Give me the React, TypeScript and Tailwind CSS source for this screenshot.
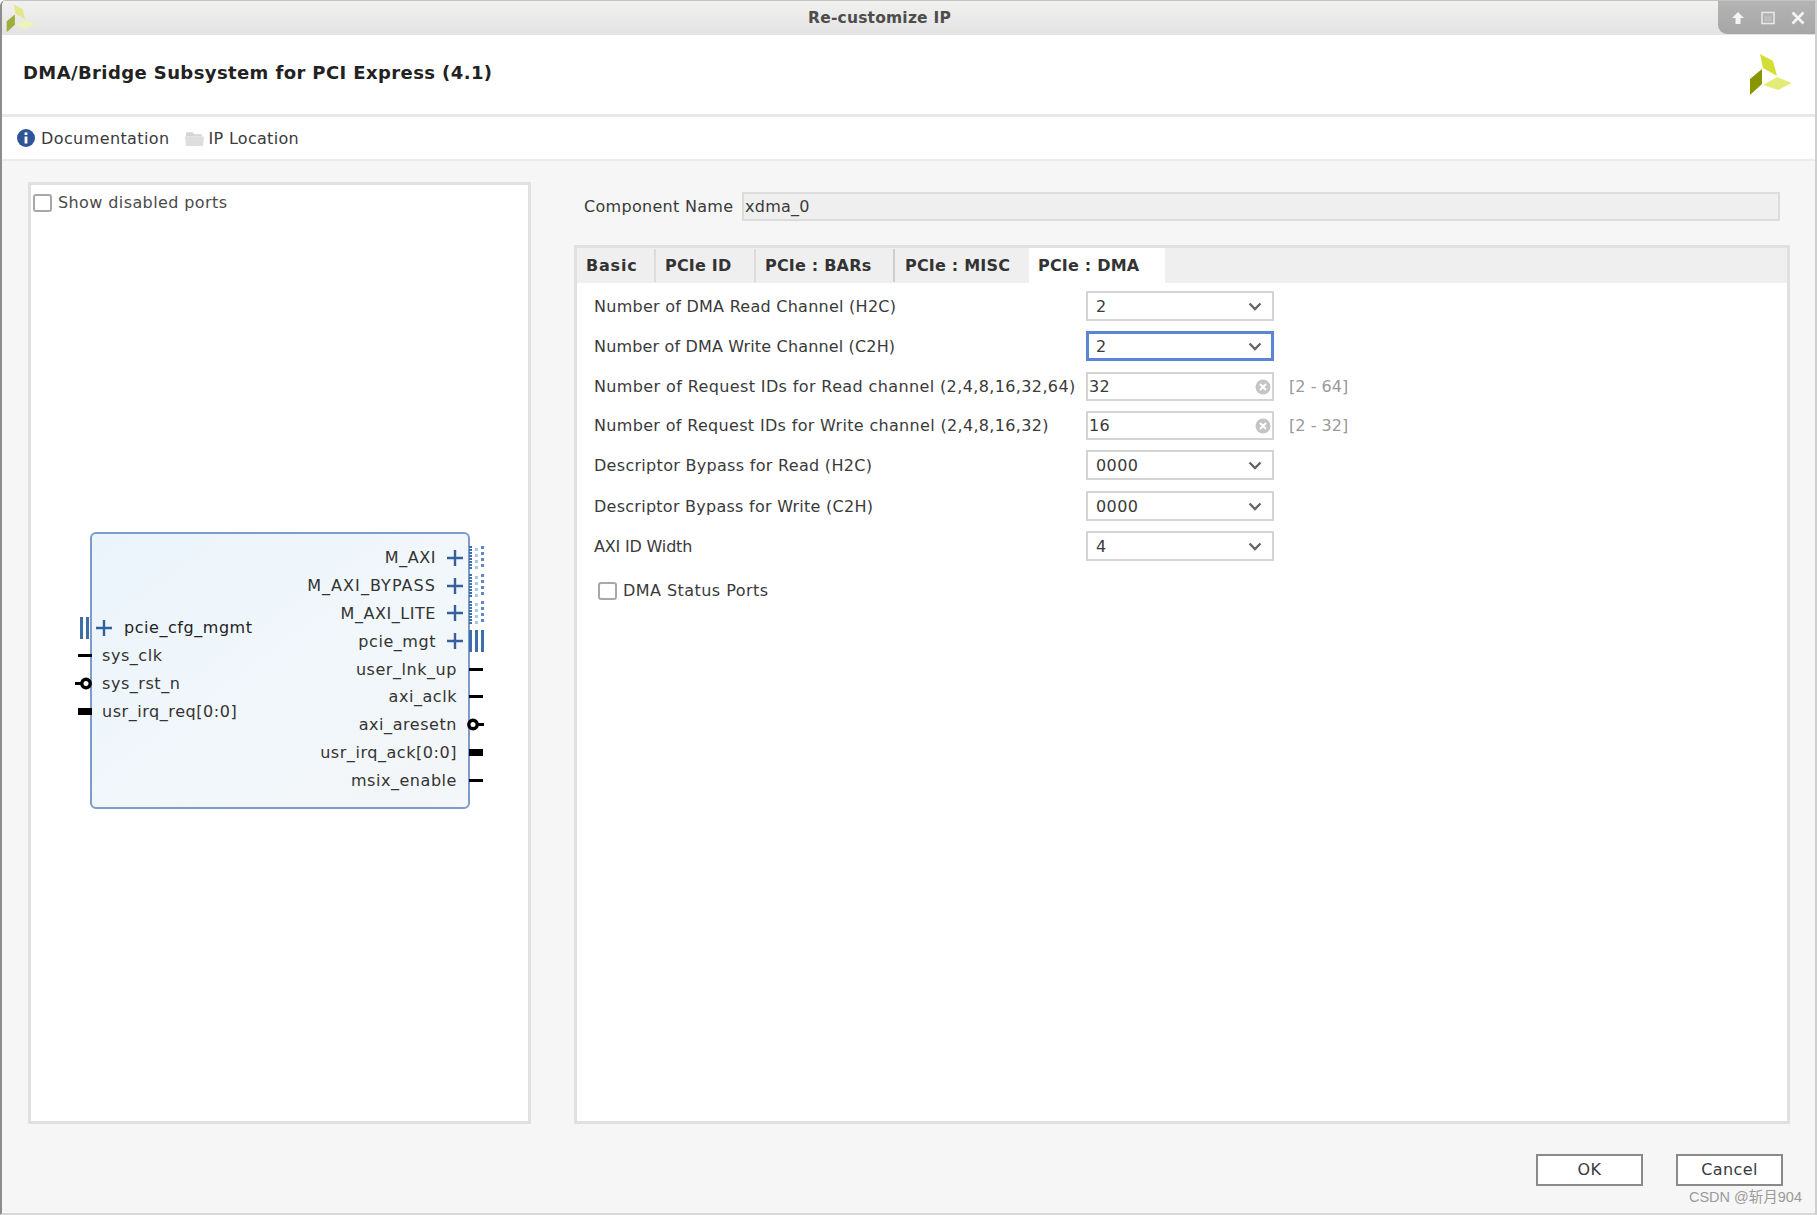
import React from "react";

const font = { fontFamily: '"DejaVu Sans", "Noto Sans CJK SC", sans-serif' };

function Logo({ className, pale }: { className: string; pale?: boolean }) {
  return (
    <svg viewBox="0 0 44 42" className={className}>
      <polygon points="11,0 24,7 28,22 14,14" fill={pale ? "#e3e88a" : "#d3de35"} />
      <polygon points="14,31 28,23 43,29 29,36" fill={pale ? "#f0f3b8" : "#e3ec78"} />
      <polygon points="1,25 13,15 13,30 1,41" fill={pale ? "#a0ad38" : "#8a9600"} />
    </svg>
  );
}

function Chevron() {
  return (
    <svg viewBox="0 0 14 9" className="w-[14px] h-[9px]">
      <path d="M1.5 1.5 L7 7 L12.5 1.5" fill="none" stroke="#666" strokeWidth="2.4" />
    </svg>
  );
}

function Select({ value, focused }: { value: string; focused?: boolean }) {
  return (
    <div
      className={`w-[188px] h-[30px] bg-white flex items-center justify-between ${
        focused ? "border-[3px] border-[#5b86d6] pl-[7px] pr-[9px]" : "border-2 border-[#d4d4d4] pl-[8px] pr-[10px]"
      }`}
    >
      <span className="pt-[1px]">{value}</span>
      <Chevron />
    </div>
  );
}

function NumberInput({ value }: { value: string }) {
  return (
    <div className="w-[188px] h-[29px] bg-white border-2 border-[#d4d4d4] flex items-center justify-between pl-[1px] pr-[1px]">
      <span>{value}</span>
      <svg viewBox="0 0 16 16" className="w-[16px] h-[16px]">
        <circle cx="8" cy="8" r="7.5" fill="#c4c4c4" />
        <path d="M5 5 L11 11 M11 5 L5 11" stroke="#fff" strokeWidth="2" />
      </svg>
    </div>
  );
}

function Row({ label, mt, track, children, hint }: { label: string; mt: string; track: string; children: React.ReactNode; hint?: string }) {
  return (
    <div className={`flex items-center ${mt}`}>
      <div className={`w-[492px] whitespace-nowrap pt-[1px] ${track}`}>{label}</div>
      {children}
      {hint && <span className="ml-[15px] text-[#999] tracking-[0.05px]">{hint}</span>}
    </div>
  );
}

const Plus = () => (
  <svg viewBox="0 0 16 16" className="w-[16px] h-[16px] shrink-0">
    <path d="M8 0 V16 M0 8 H16" stroke="#34609c" strokeWidth="2.4" />
  </svg>
);

const BusSolid = ({ n, className }: { n: number; className?: string }) => (
  <div className={`flex gap-[3px] h-[22px] ${className ?? ""}`}>
    {Array.from({ length: n }).map((_, i) => (
      <div key={i} className="w-[3px] h-full bg-[#3e6ea8]" />
    ))}
  </div>
);

const BusDotted = () => (
  <svg viewBox="0 0 15 24" className="w-[15px] h-[24px]">
    {[0, 1, 2, 3, 4, 5, 6, 7].map((r) => (
      <rect key={`a${r}`} x="0" y={r * 3} width="3" height="2" fill="#3e6ea8" />
    ))}
    {[0, 1, 2, 3].map((r) => (
      <rect key={`b${r}`} x="6" y={r * 6 + 2} width="3" height="3" fill="#a9c6e8" />
    ))}
    {[0, 1, 2, 3].map((r) => (
      <rect key={`c${r}`} x="12" y={r * 6} width="3" height="3" fill="#5d8ac2" />
    ))}
  </svg>
);

const Wire = ({ thick }: { thick?: boolean }) => (
  <div className={`w-[14px] bg-black ${thick ? "h-[7px]" : "h-[3px]"}`} />
);

const Bubble = ({ side }: { side: "l" | "r" }) => (
  <svg viewBox="0 0 17 13" className="w-[17px] h-[13px]">
    {side === "l" ? (
      <>
        <path d="M0 6.5 H6" stroke="#000" strokeWidth="3" />
        <circle cx="11" cy="6.5" r="4.2" fill="#fff" stroke="#000" strokeWidth="3.4" />
      </>
    ) : (
      <>
        <path d="M11 6.5 H17" stroke="#000" strokeWidth="3" />
        <circle cx="6" cy="6.5" r="4.2" fill="#fff" stroke="#000" strokeWidth="3.4" />
      </>
    )}
  </svg>
);

function RightPort({ name, port, plus, track, offset }: { name: string; port: React.ReactNode; plus?: boolean; track?: string; offset?: string }) {
  return (
    <div className="h-[27.8px] flex items-center justify-end relative">
      <span className={`pt-[1px] ${track ?? ""} ${plus ? "mr-[11px]" : "mr-[11px]"}`}>{name}</span>
      {plus && (
        <span className="mr-[5px]">
          <Plus />
        </span>
      )}
      <div className={`absolute left-full top-0 h-full flex items-center w-[17px] ${offset ?? "ml-[1px]"}`}>{port}</div>
    </div>
  );
}

function LeftPort({ name, port, plus }: { name: string; port: React.ReactNode; plus?: boolean }) {
  return (
    <div className="h-[27.8px] flex items-center relative">
      {plus && (
        <span className="ml-[4px] mr-[12px]">
          <Plus />
        </span>
      )}
      <span className={`pt-[1px] ${plus ? "text-[#222]" : "ml-[10px]"}`}>{name}</span>
      <div className="absolute right-full top-0 h-full flex items-center justify-end w-[17px]">{port}</div>
    </div>
  );
}

function Block() {
  return (
    <div className="ml-[59px] mt-[319px] w-[380px] h-[277px] border-2 border-[#7d9ccb] rounded-[6px] bg-gradient-to-br from-[#eaf4fb] via-[#f1f7fb] to-[#f4f6f8] flex justify-between text-[#333] tracking-[0.55px]">
      <div className="pt-[80px] flex flex-col">
        <LeftPort name="pcie_cfg_mgmt" plus port={<BusSolid n={2} className="mr-[3px]" />} />
        <LeftPort name="sys_clk" port={<Wire />} />
        <LeftPort name="sys_rst_n" port={<Bubble side="l" />} />
        <LeftPort name="usr_irq_req[0:0]" port={<Wire thick />} />
      </div>
      <div className="pt-[10px] flex flex-col">
        <RightPort name="M_AXI" plus port={<BusDotted />} />
        <RightPort name="M_AXI_BYPASS" track="tracking-[1.05px]" plus port={<BusDotted />} />
        <RightPort name="M_AXI_LITE" plus port={<BusDotted />} />
        <RightPort name="pcie_mgt" plus port={<BusSolid n={3} />} />
        <RightPort name="user_lnk_up" port={<Wire />} />
        <RightPort name="axi_aclk" port={<Wire />} />
        <RightPort name="axi_aresetn" offset="-ml-[1px]" port={<Bubble side="r" />} />
        <RightPort name="usr_irq_ack[0:0]" port={<Wire thick />} />
        <RightPort name="msix_enable" port={<Wire />} />
      </div>
    </div>
  );
}

export default function App() {
  return (
    <div
      style={font}
      className="w-[1817px] h-[1215px] overflow-hidden relative bg-[#f6f6f6] text-[16px] tracking-[0.4px] text-[#3a3a3a] flex flex-col border-l-2 border-l-[#8c8c8c] border-b-2 border-b-[#d8d8d8] border-r-2 border-r-[#cfcfcf] rounded-tl-[6px]"
    >
      {/* Title bar */}
      <div className="h-[35px] shrink-0 bg-gradient-to-b from-[#f1f1f0] to-[#e3e3e3] border-t border-t-[#c4c4c4] flex items-center relative">
        <Logo className="w-[30px] h-[29px] ml-[4px] absolute top-[3px] left-0" pale />
        <div className="flex-1 text-center font-bold text-[15.5px] tracking-[0.2px] text-[#4d4d4d] pt-[1px] mr-[58px]">Re-customize IP</div>
        <div className="absolute right-0 top-0 w-[97px] h-[33px] bg-gradient-to-b from-[#b4b4b4] to-[#a6a6a6] rounded-bl-[9px] flex items-center justify-between pl-[13px] pr-[10px]">
          <svg viewBox="0 0 14 14" className="w-[14px] h-[14px]">
            <path d="M7 1 L13 7 H9.5 V13 H4.5 V7 H1 Z" fill="#f4f4f4" />
          </svg>
          <svg viewBox="0 0 14 14" className="w-[14px] h-[14px]">
            <rect x="1" y="1.5" width="12" height="11" fill="none" stroke="#e8e8e8" strokeWidth="1.6" />
            <rect x="3" y="4.5" width="8" height="6" fill="#bdbdbd" />
          </svg>
          <svg viewBox="0 0 14 14" className="w-[14px] h-[14px]">
            <path d="M1.5 1.5 L12.5 12.5 M12.5 1.5 L1.5 12.5" stroke="#f4f4f4" strokeWidth="2.6" />
          </svg>
        </div>
      </div>

      {/* Header */}
      <div className="h-[79px] shrink-0 bg-white flex items-center justify-between pl-[21px] pr-[22px]">
        <div className="font-bold text-[18px] text-[#222] -mt-[4px]">DMA/Bridge Subsystem for PCI Express (4.1)</div>
        <Logo className="w-[44px] h-[42px] -mb-[1px]" />
      </div>
      <div className="h-[3px] shrink-0 bg-[#e8e8e8]" />

      {/* Toolbar */}
      <div className="h-[44px] shrink-0 bg-white flex items-center pl-[15px] border-b-2 border-b-[#ececec]">
        <svg viewBox="0 0 18 18" className="w-[18px] h-[18px]">
          <circle cx="9" cy="9" r="9" fill="#2f5597" />
          <rect x="7.6" y="7.5" width="2.8" height="7" fill="#fff" />
          <rect x="7.6" y="3.4" width="2.8" height="2.6" fill="#fff" />
        </svg>
        <span className="ml-[6px] pt-[1px]">Documentation</span>
        <svg viewBox="0 0 18 16" className="w-[19px] h-[17px] ml-[15px]">
          <path d="M1 2 H7 L9 4 H16 V6 H1 Z" fill="#d6d6d6" />
          <path d="M0 6 H18 L17 15 H1 Z" fill="#dedede" />
        </svg>
        <span className="ml-[5px] pt-[1px] tracking-[0.3px]">IP Location</span>
      </div>

      {/* Body */}
      <div className="flex-1 flex pt-[21px] pl-[26px] pr-[25px]">
        <div className="w-[503px] h-[942px] bg-white border-[3px] border-[#e0e0e0] shrink-0">
          <div className="flex items-center pl-[2px] pt-[7px] h-[28px]">
            <div className="w-[19px] h-[18px] rounded-[3px] border-2 border-[#a8a8a8] bg-white" />
            <span className="ml-[6px] pt-[1px] text-[#4a4a4a]">Show disabled ports</span>
          </div>
          <Block />
        </div>

        <div className="flex-1 ml-[43px] flex flex-col min-w-0">
          <div className="flex items-center h-[30px] mt-[9px] ml-[10px] mr-[10px]">
            <span className="w-[158px] shrink-0 pt-[2px] tracking-[0.3px]">Component Name</span>
            <div className="flex-1 h-[29px] bg-[#efefef] border-2 border-[#dcdcdc] flex items-center pl-[1px] pt-[1px] tracking-[0.25px]">xdma_0</div>
          </div>

          <div className="mt-[24px] w-[1216px] h-[879px] bg-white border-[3px] border-[#e0e0e0] flex flex-col">
            <div className="h-[35px] shrink-0 bg-[#efefef] flex items-stretch font-bold text-[#333] tracking-[0.2px]">
              <div className="w-[79px] flex items-center pl-[9px] border-r-2 border-r-[#dcdcdc] my-[1px] tracking-[0.8px]">Basic</div>
              <div className="w-[100px] flex items-center pl-[9px] border-r-2 border-r-[#dcdcdc] my-[1px]">PCIe ID</div>
              <div className="w-[139px] flex items-center pl-[9px] border-r-2 border-r-[#cfcfcf] my-[1px]">PCIe : BARs</div>
              <div className="w-[134px] flex items-center pl-[10px]">PCIe : MISC</div>
              <div className="w-[136px] flex items-center pl-[9px] bg-white">PCIe : DMA</div>
            </div>
            <div className="pl-[17px] pt-[8px]">
              <Row label="Number of DMA Read Channel (H2C)" mt="" track="tracking-[0.26px]">
                <Select value="2" />
              </Row>
              <Row label="Number of DMA Write Channel (C2H)" mt="mt-[10px]" track="tracking-[0.16px]">
                <Select value="2" focused />
              </Row>
              <Row label="Number of Request IDs for Read channel (2,4,8,16,32,64)" mt="mt-[11px]" track="tracking-[0.38px]" hint="[2 - 64]">
                <NumberInput value="32" />
              </Row>
              <Row label="Number of Request IDs for Write channel (2,4,8,16,32)" mt="mt-[10px]" track="tracking-[0.33px]" hint="[2 - 32]">
                <NumberInput value="16" />
              </Row>
              <Row label="Descriptor Bypass for Read (H2C)" mt="mt-[10px]" track="tracking-[0.3px]">
                <Select value="0000" />
              </Row>
              <Row label="Descriptor Bypass for Write (C2H)" mt="mt-[11px]" track="tracking-[0.26px]">
                <Select value="0000" />
              </Row>
              <Row label="AXI ID Width" mt="mt-[10px]" track="-tracking-[0.18px]">
                <Select value="4" />
              </Row>
              <div className="flex items-center mt-[17px] ml-[4px]">
                <div className="w-[19px] h-[18px] rounded-[3px] border-2 border-[#a8a8a8] bg-white" />
                <span className="ml-[6px] pt-[1px] tracking-[0.45px]">DMA Status Ports</span>
              </div>
            </div>
          </div>
        </div>
      </div>

      {/* Footer */}
      <div className="h-[89px] shrink-0 flex justify-end pt-[30px] pr-[32px] gap-[33px]">
        <div className="w-[107px] h-[32px] bg-white border-2 border-[#8a8a8a] flex items-center justify-center">OK</div>
        <div className="w-[107px] h-[32px] bg-white border-2 border-[#8a8a8a] flex items-center justify-center">Cancel</div>
      </div>

      <div
        className="absolute right-[13px] bottom-[4px] text-[14.5px] tracking-normal text-[#9a9a9a]"
        style={{ fontFamily: '"Liberation Sans", "Noto Sans CJK SC", sans-serif' }}
      >
        CSDN @斩月904
      </div>
    </div>
  );
}
